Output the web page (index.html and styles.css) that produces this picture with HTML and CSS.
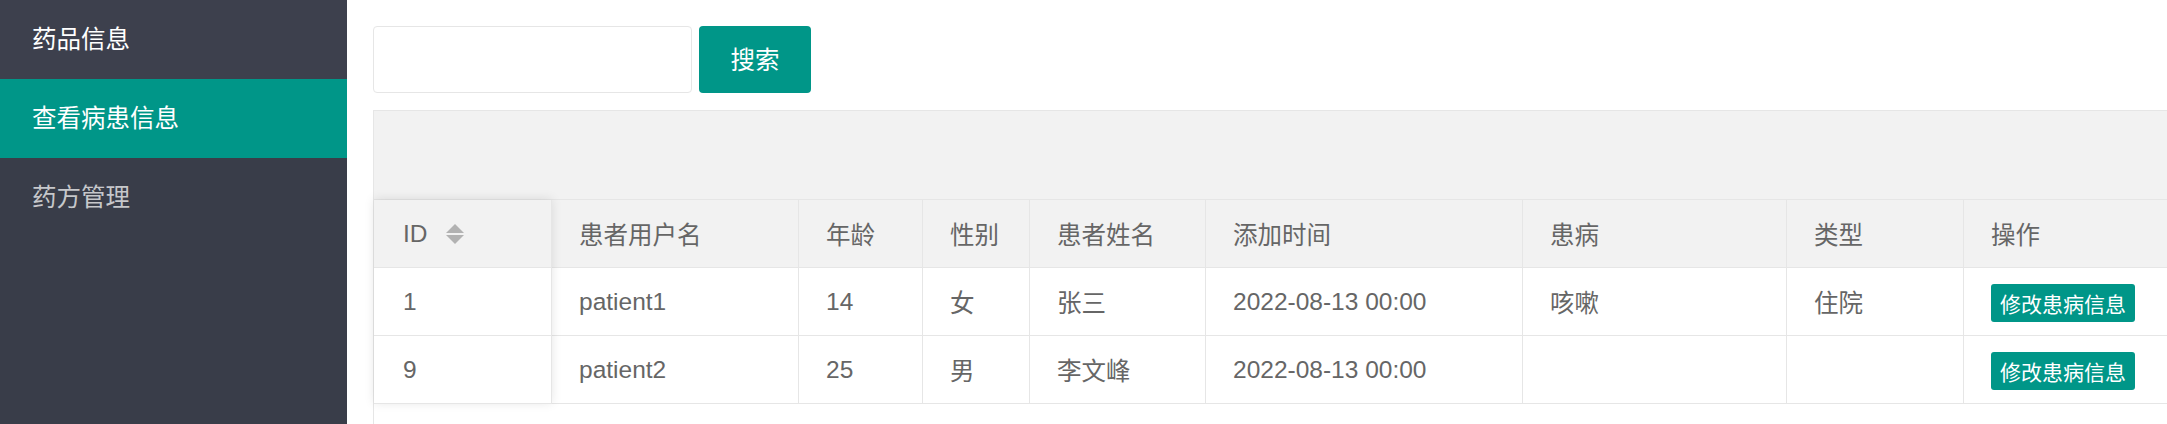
FILE: index.html
```html
<!DOCTYPE html>
<html lang="zh-CN">
<head>
<meta charset="utf-8">
<title>查看病患信息</title>
<link rel="stylesheet" href="styles.css">
</head>
<body>
<div class="layout">
  <aside class="side">
    <a class="nav-item nav-hover">药品信息</a>
    <a class="nav-item nav-active">查看病患信息</a>
    <a class="nav-item">药方管理</a>
  </aside>
  <main class="main">
    <div class="search">
      <input class="search-input" type="text">
      <button class="btn">搜索</button>
    </div>
    <div class="table-view">
      <div class="table-tool"></div>
      <div class="table-body">
        <div class="fixed-col">
          <div class="cell head c-id">ID
            <svg class="sort" width="18" height="20" viewBox="0 0 18 20"><path d="M9 0 L18 9 L0 9 Z" fill="#b2b2b2"/><path d="M0 11 L18 11 L9 20 Z" fill="#b2b2b2"/></svg>
          </div>
          <div class="cell c-id">1</div>
          <div class="cell c-id">9</div>
        </div>
        <div class="cols">
          <div class="row head">
            <div class="cell c-user">患者用户名</div>
            <div class="cell c-age">年龄</div>
            <div class="cell c-sex">性别</div>
            <div class="cell c-name">患者姓名</div>
            <div class="cell c-time">添加时间</div>
            <div class="cell c-ill">患病</div>
            <div class="cell c-type">类型</div>
            <div class="cell c-op">操作</div>
          </div>
          <div class="row">
            <div class="cell c-user">patient1</div>
            <div class="cell c-age">14</div>
            <div class="cell c-sex">女</div>
            <div class="cell c-name">张三</div>
            <div class="cell c-time">2022-08-13 00:00</div>
            <div class="cell c-ill">咳嗽</div>
            <div class="cell c-type">住院</div>
            <div class="cell c-op"><button class="btn-xs">修改患病信息</button></div>
          </div>
          <div class="row">
            <div class="cell c-user">patient2</div>
            <div class="cell c-age">25</div>
            <div class="cell c-sex">男</div>
            <div class="cell c-name">李文峰</div>
            <div class="cell c-time">2022-08-13 00:00</div>
            <div class="cell c-ill"></div>
            <div class="cell c-type"></div>
            <div class="cell c-op"><button class="btn-xs">修改患病信息</button></div>
          </div>
        </div>
      </div>
    </div>
  </main>
</div>
</body>
</html>
```
FILE: styles.css
```css
* { box-sizing: border-box; }
html, body { margin: 0; padding: 0; }
body {
  font-family: "Liberation Sans", "Noto Sans CJK SC", sans-serif;
  font-size: 24.5px;
  color: #666;
  background: #fff;
  overflow: hidden;
}
.layout {
  display: flex;
  height: 424px;
  overflow: hidden;
}
.side {
  flex: 0 0 347px;
  width: 347px;
  background: #393d49;
  display: flex;
  flex-direction: column;
}
.nav-item {
  display: flex;
  align-items: center;
  height: 79px;
  padding-left: 32px;
  padding-bottom: 4px;
  font-size: 24.5px;
  color: rgba(255, 255, 255, 0.72);
  text-decoration: none;
}
.nav-hover { color: #fff; background: #3d404d; }
.nav-active { color: #fff; background: #009688; }

.main {
  flex: 1 1 auto;
  min-width: 0;
  padding: 26px 0 0 26px;
  overflow: hidden;
}
.search {
  display: flex;
  height: 67px;
}
.search-input {
  width: 319px;
  height: 67px;
  border: 1px solid #e6e6e6;
  border-radius: 4px;
  background: #fff;
  margin: 0;
  padding: 0 18px;
  font: inherit;
  outline: none;
}
.btn {
  margin-left: 7px;
  width: 112px;
  height: 67px;
  border: none;
  border-radius: 4px;
  background: #009688;
  color: #fff;
  font-family: "Liberation Sans", "Noto Sans CJK SC", sans-serif;
  font-size: 24.5px;
  padding: 0 0 3px;
}
.table-view {
  margin-top: 17px;
  width: 1860px;
  height: 340px;
  border-top: 1px solid #e6e6e6;
  border-left: 1px solid #e6e6e6;
  background: #fff;
}
.table-tool {
  height: 89px;
  background: #f2f2f2;
  border-bottom: 1px solid #e6e6e6;
}
.table-body {
  display: flex;
  align-items: flex-start;
}
.fixed-col {
  position: relative;
  z-index: 1;
  display: flex;
  flex-direction: column;
  background: #fff;
  box-shadow: 0 -1px 10px rgba(0, 0, 0, 0.1);
}
.cols {
  display: flex;
  flex-direction: column;
}
.row {
  display: flex;
}
.cell {
  display: flex;
  align-items: center;
  height: 68px;
  padding-left: 27px;
  border-right: 1px solid #e6e6e6;
  border-bottom: 1px solid #e6e6e6;
  background: #fff;
  white-space: nowrap;
}
.head, .row.head .cell { background: #f2f2f2; }
.fixed-col .head { background: #f2f2f2; }
.c-id { width: 178px; padding-left: 29px; }
.c-user { width: 247px; }
.c-age { width: 124px; }
.c-sex { width: 107px; }
.c-name { width: 176px; }
.c-time { width: 317px; }
.c-ill { width: 264px; }
.c-type { width: 177px; }
.c-op { width: 270px; border-right: none; }
.sort {
  margin-left: 18px;
  display: block;
}
.btn-xs {
  height: 38px;
  padding: 0 9px;
  border: none;
  border-radius: 3px;
  background: #009688;
  color: #fff;
  font-family: "Liberation Sans", "Noto Sans CJK SC", sans-serif;
  font-size: 21px;
  margin-top: 2px;
}
```
